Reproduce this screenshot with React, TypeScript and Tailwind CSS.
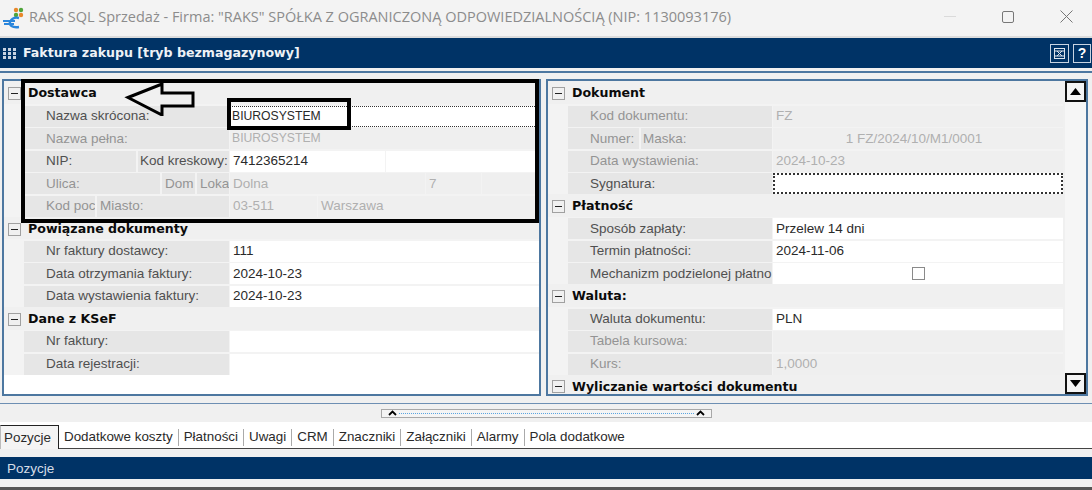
import { ReactNode } from "react";

function Toggle() {
  return (
    <div className="w-[13px] h-[13px] border border-[#a0a0a0] bg-[#f0f0f0] flex items-center justify-center shrink-0">
      <div className="w-[7px] h-px bg-[#222]" />
    </div>
  );
}

function Section({ title }: { title: string }) {
  return (
    <div className="h-[22.55px] flex items-center bg-[#f0f0f0] pl-[4px] pt-[2px]">
      <Toggle />
      <span className="ml-[7px] font-['DejaVu_Sans',sans-serif] font-bold text-[12.6px] text-[#0b0b0b] leading-none">{title}</span>
    </div>
  );
}

function Label({ children, w, dim }: { children: ReactNode; w?: string; dim?: boolean }) {
  return (
    <div
      className={`${w ?? "flex-1"} h-[21px] bg-[#e6e6e6] flex items-center overflow-hidden whitespace-nowrap text-[13.5px] ${dim ? "text-[#949494]" : "text-[#505050]"}`}
    >
      {children}
    </div>
  );
}

function Value({ children, w, dim }: { children?: ReactNode; w?: string; dim?: boolean }) {
  return (
    <div
      className={`${w ?? "flex-1"} h-[21px] flex items-center pl-[3px] whitespace-nowrap text-[13.5px] ${dim ? "bg-[#efefef] text-[#b0b0b0]" : "bg-white text-[#2a2a2a]"}`}
    >
      {children}
    </div>
  );
}

function RowBox({ children }: { children: ReactNode }) {
  return <div className="h-[22.55px] flex items-end gap-px pl-[20px] bg-[#f3f3f3]">{children}</div>;
}

function Row({ label, value, dim, labelW }: { label: string; value?: string; dim?: boolean; labelW?: string }) {
  return (
    <RowBox>
      <Label w={labelW ?? "w-[205px]"} dim={dim}>
        <span className="pl-[22px]">{label}</span>
      </Label>
      <Value dim={dim}>{value}</Value>
    </RowBox>
  );
}

function LeftPanel() {
  return (
    <div className="w-[539px] border-2 border-[#4d77a0] bg-white overflow-hidden">
      <div className="h-[0.5px] bg-[#f0f0f0]" />
      <Section title="Dostawca" />
      <RowBox>
        <Label w="w-[205px]"><span className="pl-[22px]">Nazwa skrócona:</span></Label>
        <div className="flex-1 h-[21px] bg-white border-y border-dotted border-[#333] flex items-center whitespace-nowrap text-[12.2px] text-[#2a2a2a] pl-[2px]">
          BIUROSYSTEM
        </div>
      </RowBox>
      <RowBox>
        <Label w="w-[205px]" dim><span className="pl-[22px]">Nazwa pełna:</span></Label>
        <Value dim><span className="text-[12.2px] -ml-px">BIUROSYSTEM</span></Value>
      </RowBox>
      <RowBox>
        <div className="w-[205px] flex gap-[2px]">
          <Label w="w-[112px]"><span className="pl-[22px]">NIP:</span></Label>
          <Label><span className="pl-[2px]">Kod kreskowy:</span></Label>
        </div>
        <Value w="w-[155px]">7412365214</Value>
        <Value />
      </RowBox>
      <RowBox>
        <div className="w-[205px] flex gap-[2px]">
          <Label w="w-[136px]" dim><span className="pl-[22px]">Ulica:</span></Label>
          <Label w="w-[33px]" dim><span className="pl-[3px]">Dom</span></Label>
          <Label dim><span className="pl-[3px]">Loka</span></Label>
        </div>
        <Value w="w-[195px]" dim>Dolna</Value>
        <Value w="w-[55px]" dim>7</Value>
        <Value dim />
      </RowBox>
      <RowBox>
        <div className="w-[205px] flex gap-[2px]">
          <Label w="w-[71px]" dim><span className="pl-[22px]">Kod poc</span></Label>
          <Label dim><span className="pl-[3px]">Miasto:</span></Label>
        </div>
        <Value w="w-[87px]" dim>03-511</Value>
        <Value dim>Warszawa</Value>
      </RowBox>
      <Section title="Powiązane dokumenty" />
      <Row label="Nr faktury dostawcy:" value="111" />
      <Row label="Data otrzymania faktury:" value="2024-10-23" />
      <Row label="Data wystawienia faktury:" value="2024-10-23" />
      <Section title="Dane z KSeF" />
      <Row label="Nr faktury:" />
      <Row label="Data rejestracji:" />
    </div>
  );
}

function RightPanel() {
  const lw = "w-[204px]";
  return (
    <div className="flex-1 border-2 border-[#4d77a0] bg-[#f0f0f0] flex overflow-hidden">
      <div className="flex-1 overflow-hidden">
        <div className="h-[0.5px]" />
        <Section title="Dokument" />
        <Row labelW={lw} label="Kod dokumentu:" value="FZ" dim />
        <RowBox>
          <div className="w-[204px] flex gap-[2px]">
            <Label w="w-[71px]" dim><span className="pl-[22px]">Numer:</span></Label>
            <Label dim><span className="pl-[2px]">Maska:</span></Label>
          </div>
          <div className="flex-1 h-[21px] bg-[#efefef] flex items-center justify-center text-[13.5px] text-[#b0b0b0] pr-[8px]">
            1 FZ/2024/10/M1/0001
          </div>
        </RowBox>
        <Row labelW={lw} label="Data wystawienia:" value="2024-10-23" dim />
        <RowBox>
          <Label w={lw}><span className="pl-[22px]">Sygnatura:</span></Label>
          <div className="flex-1 h-[21px] bg-white border-2 border-dotted border-[#333]" />
        </RowBox>
        <Section title="Płatność" />
        <Row labelW={lw} label="Sposób zapłaty:" value="Przelew 14 dni" />
        <Row labelW={lw} label="Termin płatności:" value="2024-11-06" />
        <RowBox>
          <Label w={lw}><span className="pl-[22px]">Mechanizm podzielonej płatno</span></Label>
          <div className="flex-1 h-[21px] bg-white flex items-center justify-center">
            <div className="w-[13px] h-[13px] border border-[#8a8a8a] bg-white" />
          </div>
        </RowBox>
        <Section title="Waluta:" />
        <Row labelW={lw} label="Waluta dokumentu:" value="PLN" />
        <Row labelW={lw} label="Tabela kursowa:" dim />
        <Row labelW={lw} label="Kurs:" value="1,0000" dim />
        <Section title="Wyliczanie wartości dokumentu" />
      </div>
      <div className="w-[21px] ml-[2px] bg-[#f6f6f6] flex flex-col justify-between">
        <div className="h-[21px] border-2 border-[#111] bg-[#f4f4f4] flex items-center justify-center">
          <svg width="11" height="7" viewBox="0 0 11 7"><path d="M5.5 0 11 7H0z" fill="#000" /></svg>
        </div>
        <div className="h-[21px] border-2 border-[#111] bg-[#f4f4f4] flex items-center justify-center">
          <svg width="11" height="7" viewBox="0 0 11 7"><path d="M0 0h11L5.5 7z" fill="#000" /></svg>
        </div>
      </div>
    </div>
  );
}

function Caret() {
  return (
    <svg width="9" height="6" viewBox="0 0 9 6">
      <path d="M1 5 4.5 1.5 8 5" fill="none" stroke="#000" strokeWidth="1.8" />
    </svg>
  );
}

const tabs = ["Dodatkowe koszty", "Płatności", "Uwagi", "CRM", "Znaczniki", "Załączniki", "Alarmy", "Pola dodatkowe"];

export default function App() {
  return (
    <div className="font-['Liberation_Sans',sans-serif] relative w-[1092px] h-[490px] overflow-hidden bg-[#f0f0f0]">
      {/* window title */}
      <div className="h-[38px] flex items-center pb-[3px] bg-[#f3f3f3] border-b-2 border-[#dcdcdc]">
        <svg width="24" height="24" viewBox="0 0 24 24" className="ml-[2px] mr-[3px] mt-[2px]">
          <circle cx="14" cy="4" r="2.2" fill="#e8872a" />
          <circle cx="19" cy="4" r="2.2" fill="#4fa53a" />
          <circle cx="14" cy="9" r="2.2" fill="#4fa53a" />
          <circle cx="19" cy="9" r="2.2" fill="#e8872a" />
          <path d="M17 12c-4-1-7 0-9 4-1 3 2 6 9 5" fill="none" stroke="#2a86dc" strokeWidth="2.4" />
          <path d="M1 15h12M2 18h10" stroke="#2a86dc" strokeWidth="2" />
        </svg>
        <span className="font-['Open_Sans',sans-serif] text-[14.5px] text-[#8c8c8c] whitespace-nowrap">
          RAKS SQL Sprzedaż - Firma: "RAKS" SPÓŁKA Z OGRANICZONĄ ODPOWIEDZIALNOŚCIĄ (NIP: 1130093176)
        </span>
        <div className="ml-auto flex items-center">
          <div className="w-[12px] h-px bg-[#dadada] mr-[46px]" />
          <div className="w-[12px] h-[12px] border border-[#777] rounded-[2px] mr-[46px]" />
          <svg width="13" height="13" viewBox="0 0 13 13" className="mr-[19px]">
            <path d="M0.5 0.5 12.5 12.5M12.5 0.5 0.5 12.5" stroke="#777" strokeWidth="1" />
          </svg>
        </div>
      </div>

      {/* form header */}
      <div className="h-[30px] bg-[#003366] flex items-center pl-[3px] pr-px">
        <svg width="13" height="13" viewBox="0 0 13 13" fill="#c8d4e2">
          <rect x="0" y="1" width="3" height="3" /><rect x="5" y="1" width="3" height="3" /><rect x="10" y="1" width="3" height="3" />
          <rect x="0" y="5" width="3" height="3" /><rect x="5" y="5" width="3" height="3" /><rect x="10" y="5" width="3" height="3" />
          <rect x="0" y="9" width="3" height="3" /><rect x="5" y="9" width="3" height="3" /><rect x="10" y="9" width="3" height="3" />
        </svg>
        <span className="ml-[7px] font-['DejaVu_Sans',sans-serif] font-bold text-[12.6px] text-[#eef2f6]">Faktura zakupu [tryb bezmagazynowy]</span>
        <div className="ml-auto flex gap-[4px]">
          <div className="w-[19px] h-[19px] border border-[#c8d4e2] flex items-center justify-center">
            <svg width="11" height="11" viewBox="0 0 11 11" fill="none" stroke="#dfe6ee" strokeWidth="1">
              <rect x="0.5" y="0.5" width="10" height="10" />
              <path d="M0.5 3h10M3 3 8 8M8 3 3 8M0.5 8h10" />
            </svg>
          </div>
          <div className="w-[18px] h-[19px] border border-[#c8d4e2] flex items-center justify-center text-white font-bold text-[14px] leading-none">?</div>
        </div>
      </div>

      <div className="h-[3px]" />
      <div className="h-[1.5px] bg-[#4d77a0]" />

      {/* panels */}
      <div className="flex gap-[5px] pl-[2px] pr-[4px] pt-[6.5px] h-[323.5px] items-stretch">
        <LeftPanel />
        <RightPanel />
      </div>
      <div className="h-[6.5px]" />
      <div className="h-[1.5px] bg-[#6d8fb3]" />

      {/* splitter */}
      <div className="h-[18px] flex items-center justify-center">
        <div className="w-[331px] h-[9px] border border-[#a8a8a8] bg-[#f4f4f4] flex items-center gap-[2px] px-[6px]">
          <Caret />
          <div className="flex-1 border-t border-dotted border-[#5aa5e0]" />
          <Caret />
        </div>
      </div>

      {/* tabs */}
      <div className="h-[27px] bg-white border-b border-[#444] flex items-end text-[13.4px] text-[#2a2a2a]">
        <div className="h-[24px] w-[59px] -mb-px border-t border-r border-l border-t-[#222] border-r-[#222] border-l-[#bbb] bg-[#f4f4f4] flex items-center pl-[3px] pt-[2px]">Pozycje</div>
        <div className="flex items-center h-[24px] pt-[2px]">
          {tabs.map((t, i) => (
            <div key={t} className={`h-[17px] flex items-center px-[5px] ${i > 0 ? "border-l border-[#aaa]" : ""}`}>
              {t}
            </div>
          ))}
        </div>
      </div>

      <div className="h-[7.5px]" />
      <div className="h-[22.5px] bg-[#003366] flex items-center pl-[7px] pt-[2px] text-[13.5px] text-[#d5dde6]">Pozycje</div>
      <div className="h-[8px]" />
      <div className="h-[3px] bg-[#555]" />

      {/* annotations drawn over the screenshot */}
      <div className="absolute left-[21px] top-[79px] w-[518px] h-[144px] border-[4.5px] border-black pointer-events-none" />
      <div className="absolute left-[227px] top-[98px] w-[124px] h-[32px] border-[4.5px] border-black pointer-events-none" />
      <svg className="absolute left-[124px] top-[80px] pointer-events-none" width="72" height="36" viewBox="0 0 72 36">
        <path d="M4 17.5 38 4v9h31v13H38v9z" fill="none" stroke="#000" strokeWidth="3" />
      </svg>
    </div>
  );
}
